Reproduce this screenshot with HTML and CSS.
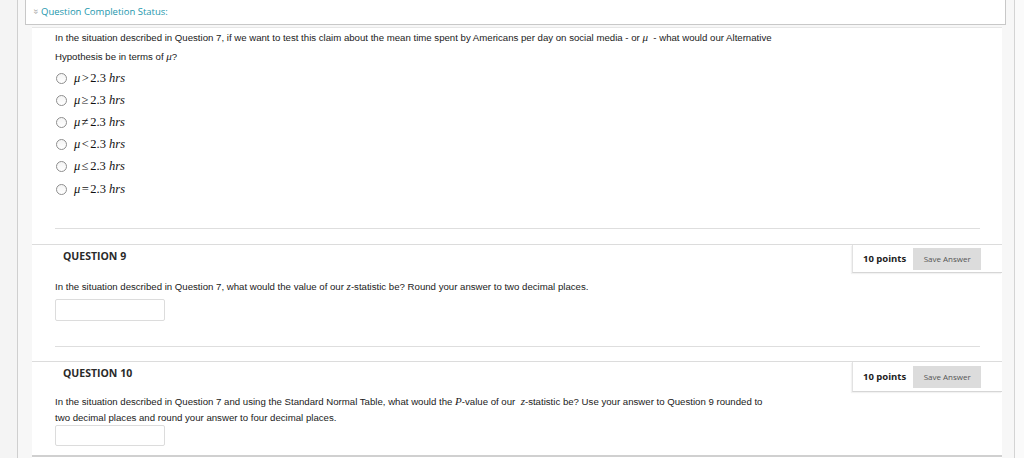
FILE: index.html
```html
<!DOCTYPE html>
<html>
<head>
<meta charset="utf-8">
<link rel="stylesheet" href="styles.css">
</head>
<body>
<div class="page">
  <div class="leftbar"></div>
  <div class="main">
    <div class="status">
      <span class="chev">&#187;</span>
      <span class="status-text">Question Completion Status:</span>
    </div>
    <div class="questions">
      <div class="q q8">
        <p class="qtext tall">In the situation described in Question 7, if we want to test this claim about the mean time spent by Americans per day on social media - or <i class="m">μ</i> &nbsp;- what would our Alternative<br>Hypothesis be in terms of <i class="m">μ</i>?</p>
        <ul class="options">
          <li><span class="radio"></span><span class="math"><i>μ</i><span class="op">&gt;</span>2.3 <i>hrs</i></span></li>
          <li><span class="radio"></span><span class="math"><i>μ</i><span class="op">≥</span>2.3 <i>hrs</i></span></li>
          <li><span class="radio"></span><span class="math"><i>μ</i><span class="op">≠</span>2.3 <i>hrs</i></span></li>
          <li><span class="radio"></span><span class="math"><i>μ</i><span class="op">&lt;</span>2.3 <i>hrs</i></span></li>
          <li><span class="radio"></span><span class="math"><i>μ</i><span class="op">≤</span>2.3 <i>hrs</i></span></li>
          <li><span class="radio"></span><span class="math"><i>μ</i><span class="op">=</span>2.3 <i>hrs</i></span></li>
        </ul>
        <div class="sep sep8"></div>
      </div>
      <div class="q q9">
        <div class="qhead">
          <h3 class="qtitle">QUESTION 9</h3>
          <div class="points"><span class="pts">10 points</span><span class="save">Save Answer</span></div>
        </div>
        <p class="qtext">In the situation described in Question 7, what would the value of our <i class="m">z</i>-statistic be? Round your answer to two decimal places.</p>
        <div class="answer"></div>
        <div class="sep sep9"></div>
      </div>
      <div class="q q10">
        <div class="qhead h10">
          <h3 class="qtitle">QUESTION 10</h3>
          <div class="points"><span class="pts">10 points</span><span class="save">Save Answer</span></div>
        </div>
        <p class="qtext t10">In the situation described in Question 7 and using the Standard Normal Table, what would the <i class="m">P</i>-value of our &nbsp;<i class="m">z</i>-statistic be? Use your answer to Question 9 rounded to<br>two decimal places and round your answer to four decimal places.</p>
        <div class="answer a10"></div>
      </div>
    </div>
  </div>
  <div class="rightbar"></div>
</div>
</body>
</html>
```

FILE: styles.css
```css
html, body {
  margin: 0;
  padding: 0;
  background: #fff;
}
.page {
  display: flex;
  width: 1024px;
  height: 458px;
  overflow: hidden;
  font-family: "Liberation Sans", Arial, sans-serif;
  color: #222;
}
.leftbar {
  width: 17px;
  flex: none;
  background: #f4f4f4;
  border-right: 1px solid #cfcfcf;
}
.main {
  width: 996px;
  flex: none;
  background: #f7f7f7;
}
.rightbar {
  flex: 1;
  background: #fafafa;
  border-left: 1px solid #d4d4d4;
}
.status {
  margin-left: 7px;
  width: 981px;
  height: 25px;
  background: #fff;
  border: 1px solid #c8c8c8;
  border-top: none;
  display: flex;
  align-items: center;
  box-sizing: border-box;
  padding-left: 7px;
  padding-bottom: 1px;
}
.chev {
  display: inline-block;
  transform: rotate(90deg);
  color: #a0a0a0;
  font-size: 9px;
  line-height: 9px;
  margin-right: 3px;
}
.status-text {
  font-family: "Open Sans", sans-serif;
  font-size: 9.5px;
  color: #1c97ad;
}
.questions {
  margin: 2px 12px 0 14px;
  background: #fff;
  border-top: 1px solid #e6e6e6;
  height: 430px;
}
.q {
  padding: 0 22px 0 23px;
  border-bottom: 1px solid #dcdcdc;
}
.qtext {
  margin: 0;
  font-size: 9.65px;
  line-height: 16px;
  color: #1a1a1a;
}
.qtext.tall {
  line-height: 19px;
}
.m {
  font-family: "Liberation Serif", serif;
  font-style: italic;
  font-size: 11px;
}
.options {
  list-style: none;
  margin: 0;
  padding: 1px 0 0;
}
.options li {
  height: 22.2px;
  display: flex;
  align-items: center;
}
.radio {
  width: 9px;
  height: 9px;
  border: 1px solid #8e8e8e;
  border-radius: 50%;
  background: linear-gradient(#f4f4f4, #fff);
  margin-left: 1px;
  margin-right: 7px;
  box-sizing: content-box;
}
.math {
  font-family: "Liberation Serif", serif;
  font-size: 12.5px;
  color: #111;
}
.op {
  margin: 0 1.5px;
}
.sep {
  border-top: 1px solid #dedede;
}
.sep8 {
  margin-top: 28px;
  margin-bottom: 15px;
}
.qhead {
  display: flex;
  align-items: flex-start;
  height: 28px;
  margin-right: -22px;
}
.h10 {
  height: 30px;
}
.qtitle {
  margin: 5px 0 0 8px;
  font-family: "Open Sans", sans-serif;
  font-weight: bold;
  font-size: 10.5px;
  line-height: 12px;
  color: #2a2a2a;
}
.points {
  margin-left: auto;
  width: 150px;
  box-sizing: border-box;
  height: 28px;
  display: flex;
  align-items: center;
  padding-left: 10px;
  border-left: 1px solid #e2e2e2;
  border-bottom: 1px solid #d6d6d6;
  box-shadow: -1px 1px 1px rgba(0,0,0,0.05);
}
.h10 .points {
  height: 30px;
}
.pts {
  font-family: "Open Sans", sans-serif;
  font-weight: bold;
  font-size: 9.5px;
  color: #222;
  margin-right: 7px;
}
.save {
  width: 68px;
  height: 22px;
  background: #dcdcdc;
  color: #555;
  font-family: "Open Sans", sans-serif;
  font-size: 8px;
  display: flex;
  align-items: center;
  justify-content: center;
}
.q9 .qtext {
  margin-top: 5px;
}
.answer {
  width: 110px;
  height: 22px;
  box-sizing: border-box;
  border: 1px solid #dcdcdc;
  border-radius: 2px;
  margin-top: 4px;
}
.sep9 {
  margin-top: 25px;
  margin-bottom: 14px;
}
.q10 {
  border-bottom: 2px solid #d0d0d0;
  padding-bottom: 9px;
}
.t10 {
  margin-top: 1px;
}
.a10 {
  margin-top: -1px;
  height: 21px;
}
```
